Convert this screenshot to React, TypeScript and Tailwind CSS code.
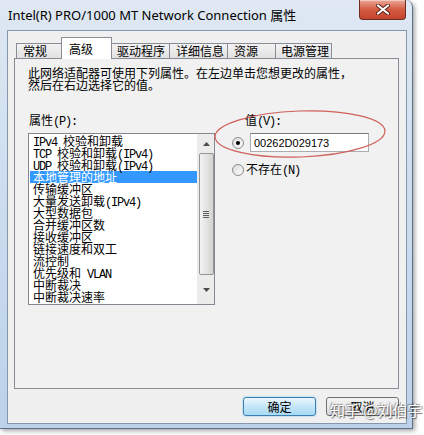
import React from "react";

const cjk = "font-['Noto_Sans_CJK_SC','Noto_Sans_CJK_JP',sans-serif]";

const tabs = [
  { label: "常规", cls: "w-[46px] pl-[6px]" },
  { label: "高级", cls: "w-[51px] pl-[7px]", active: true },
  { label: "驱动程序", cls: "w-[59px] pl-[5px]" },
  { label: "详细信息", cls: "w-[59px] pl-[6px]" },
  { label: "资源", cls: "w-[49px] pl-[6px]" },
  { label: "电源管理", cls: "w-[57px] pl-[5px]" },
];

const props = [
  "IPv4 校验和卸载",
  "TCP 校验和卸载(IPv4)",
  "UDP 校验和卸载(IPv4)",
  "本地管理的地址",
  "传输缓冲区",
  "大量发送卸载(IPv4)",
  "大型数据包",
  "合并缓冲区数",
  "接收缓冲区",
  "链接速度和双工",
  "流控制",
  "优先级和 VLAN",
  "中断裁决",
  "中断裁决速率",
];

// SimSun-ish: ascii half width, cjk full width
function Mixed({ text }: { text: string }) {
  return (
    <>
      {text
        .split(/([ -~]+)/)
        .filter(Boolean)
        .map((part, i) =>
          /^[ -~]/.test(part) ? (
            <span
              key={i}
              className="whitespace-pre font-['Liberation_Mono',monospace] text-[12px] tracking-[-1.2px]"
            >
              {part}
            </span>
          ) : (
            <span key={i}>{part}</span>
          ),
        )}
    </>
  );
}

function Radio({ checked }: { checked?: boolean }) {
  return (
    <span className="flex h-[12px] w-[12px] shrink-0 items-center justify-center rounded-full border border-[#8b8b8b] bg-gradient-to-br from-[#dcdcdc] to-[#fbfbfb]">
      {checked && <span className="h-[4px] w-[4px] rounded-full bg-black" />}
    </span>
  );
}

function Arrow({ down }: { down?: boolean }) {
  return (
    <svg viewBox="0 0 7 4" className="h-[4px] w-[7px]">
      <path d={down ? "M0 0h7L3.5 4z" : "M0 4h7L3.5 0z"} fill="#4d4d4d" />
    </svg>
  );
}

export default function App() {
  return (
    <div className="relative h-[435px] w-[424px] overflow-hidden bg-white">
      <div className="flex h-[429px] w-[413px] flex-col rounded-tr-[7px] border-r border-b border-[#5c7088] bg-gradient-to-b from-[#dfe8f3] via-[#cbdcee] to-[#bcd2ea] shadow-[2px_2px_4px_rgba(0,0,0,0.35)]">
        {/* title bar */}
        <div className="flex h-[30px] items-start">
          <div className="pl-[8px] pt-[6px] font-['Noto_Sans','Noto_Sans_CJK_SC',sans-serif] text-[13px] leading-[18px] text-black">
            Intel(R) PRO/1000 MT Network Connection 属性
          </div>
          <div className="ml-auto mr-[6px] flex h-[20px] w-[47px] items-center justify-center rounded-b-[4px] border border-t-0 border-[#6e2b22] bg-gradient-to-b from-[#e9a898] via-[#d45a43] to-[#c5442c] shadow-[inset_0_1px_0_rgba(255,255,255,0.4)]">
            <svg viewBox="0 0 14 11" className="h-[11px] w-[14px]">
              <path
                d="M2 1.5l10 8M12 1.5l-10 8"
                stroke="#5a2118"
                strokeWidth="4"
                strokeLinecap="round"
              />
              <path
                d="M2 1.5l10 8M12 1.5l-10 8"
                stroke="#ffffff"
                strokeWidth="2.2"
                strokeLinecap="round"
              />
            </svg>
          </div>
        </div>

        {/* client area */}
        <div
          className={`mb-[4px] ml-[7px] mr-[5px] flex flex-1 flex-col border border-[#8497ad] bg-[#f0f0f0] text-[12px] leading-[12px] text-black ${cjk}`}
        >
          <div className="px-[6px] pt-[6px]">
            <div className="flex h-[21px] items-end">
              {tabs.map((tab, i) =>
                tab.active ? (
                  <div
                    key={tab.label}
                    className={`relative z-10 -mb-px -ml-px flex h-[22px] items-start whitespace-nowrap border border-b-0 border-[#898c95] bg-white pt-[4px] text-[12px] leading-[14px] ${tab.cls}`}
                  >
                    {tab.label}
                  </div>
                ) : (
                  <div
                    key={tab.label}
                    className={`flex h-[15px] items-center whitespace-nowrap border border-b-0 border-[#898c95] bg-gradient-to-b from-[#f3f3f3] to-[#e1e1e1] text-[12px] leading-[14px] ${
                      i === 0 ? "ml-[2px]" : "-ml-px"
                    } ${tab.cls}`}
                  >
                    {tab.label}
                  </div>
                ),
              )}
            </div>

            {/* tab page */}
            <div className="h-[331px] w-[385px] border border-[#898c95] bg-[#f1f1f1] pl-[13px] pt-[8px]">
              <p className="leading-[12px]">
                此网络适配器可使用下列属性。在左边单击您想更改的属性，
                <br />
                然后在右边选择它的值。
              </p>

              <div className="mt-[23px] flex">
                <div>
                  <div className="pl-[1px]">
                    <Mixed text="属性(P):" />
                  </div>
                  <div className="mt-[5px] flex h-[172px] w-[187px] border border-[#828790] bg-white">
                    <div className="flex-1 pl-px pt-px">
                      {props.map((p, i) =>
                        i === 3 ? (
                          <div
                            key={p}
                            className="h-[12px] bg-[#3399ff] pl-[3px] text-white"
                          >
                            <Mixed text={p} />
                          </div>
                        ) : (
                          <div key={p} className="h-[12px] pl-[3px]">
                            <Mixed text={p} />
                          </div>
                        ),
                      )}
                    </div>
                    {/* scrollbar */}
                    <div className="flex w-[17px] flex-col items-center border-l border-[#ececec] bg-[#ececec]">
                      <div className="flex h-[19px] items-center justify-center">
                        <Arrow />
                      </div>
                      <div className="flex h-[122px] w-[15px] items-center justify-center rounded-[2px] border border-[#959595] bg-gradient-to-r from-[#f2f2f2] via-[#e4e4e4] to-[#d2d2d2]">
                        <div className="flex flex-col gap-[1px]">
                          <span className="h-px w-[6px] bg-[#5e5e5e]" />
                          <span className="h-px w-[6px] bg-[#5e5e5e]" />
                          <span className="h-px w-[6px] bg-[#5e5e5e]" />
                          <span className="h-px w-[6px] bg-[#5e5e5e]" />
                        </div>
                      </div>
                      <div className="flex flex-1 items-center justify-center">
                        <Arrow down />
                      </div>
                    </div>
                  </div>
                </div>

                <div className="ml-[17px]">
                  <div className="pl-[13px]">
                    <Mixed text="值(V):" />
                  </div>
                  <div className="mt-[5px] flex items-center">
                    <Radio checked />
                    <div className="ml-[6px] flex h-[19px] w-[119px] items-center border border-[#abadb3] border-t-[#7a7a7a] bg-white pl-[3px] font-['Liberation_Sans',sans-serif] text-[11px]">
                      00262D029173
                    </div>
                  </div>
                  <div className="mt-[11px] flex items-center">
                    <Radio />
                    <span className="ml-[2px]">
                      <Mixed text="不存在(N)" />
                    </span>
                  </div>
                </div>
              </div>
            </div>
          </div>

          {/* buttons */}
          <div className="mt-[8px] flex justify-end gap-[10px] pr-[7px]">
            <button className="flex h-[19px] w-[73px] items-center justify-center rounded-[3px] border border-[#3c7fb1] bg-gradient-to-b from-[#eaf6fd] via-[#c6e6f8] to-[#a7d9f5] shadow-[0_0_2px_#6cc3f0]">
              确定
            </button>
            <button className="flex h-[19px] w-[73px] items-center justify-center rounded-[3px] border border-[#707070] bg-gradient-to-b from-[#f2f2f2] via-[#ebebeb] to-[#d6d6d6]">
              取消
            </button>
          </div>
        </div>
      </div>

      {/* red annotation */}
      <svg
        className="absolute left-[213px] top-[106px] h-[54px] w-[174px]"
        viewBox="0 0 174 54"
        fill="none"
      >
        <ellipse
          cx="87"
          cy="28"
          rx="85"
          ry="23"
          stroke="#d0605a"
          strokeWidth="1.2"
          transform="rotate(-2 87 28)"
        />
      </svg>

      {/* watermark */}
      <div
        className={`absolute left-[330px] top-[401px] text-[15px] leading-[18px] text-white [text-shadow:1px_1px_1px_rgba(0,0,0,0.55),-1px_-1px_1px_rgba(0,0,0,0.35)] ${cjk}`}
      >
        知乎 @刘伯宇
      </div>
    </div>
  );
}
